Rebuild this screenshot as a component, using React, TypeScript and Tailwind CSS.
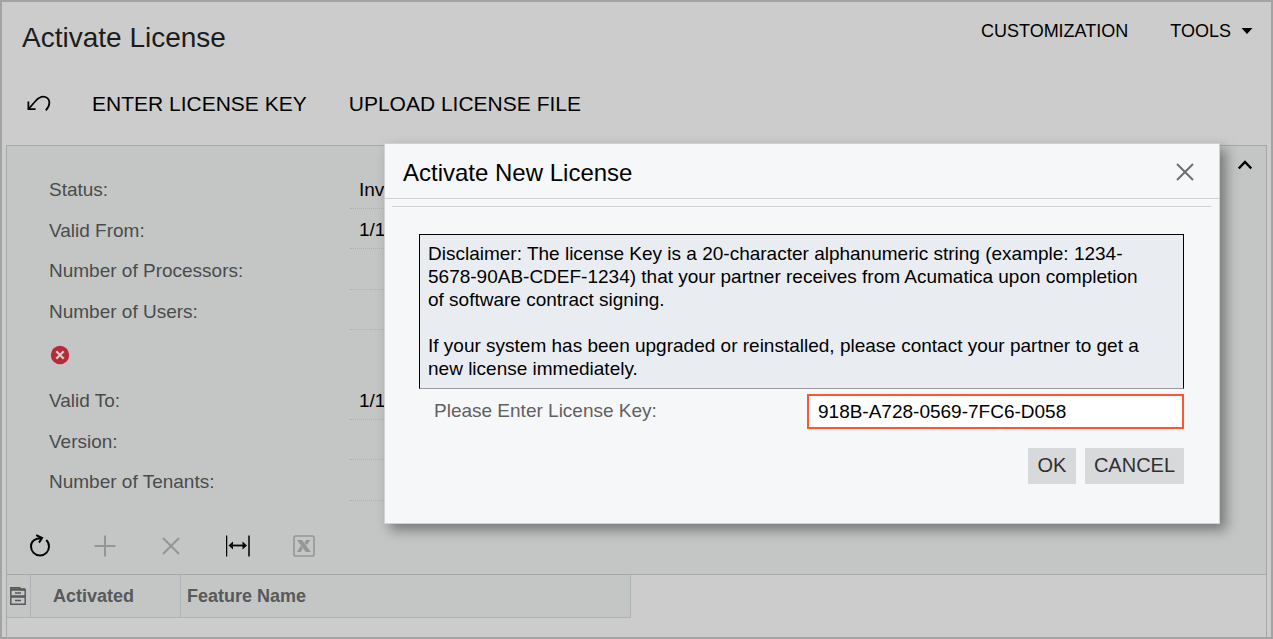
import React from 'react';

interface Field {
  id: string;
  label: string;
  value?: string;
}

const licenseFields: Field[] = [
  { id: 'status', label: 'Status:', value: 'Inv' },
  { id: 'valid-from', label: 'Valid From:', value: '1/1' },
  { id: 'processors', label: 'Number of Processors:' },
  { id: 'users', label: 'Number of Users:' }
];

const versionFields: Field[] = [
  { id: 'valid-to', label: 'Valid To:', value: '1/1' },
  { id: 'version', label: 'Version:' },
  { id: 'tenants', label: 'Number of Tenants:' }
];

const UndoIcon: React.FC = () => (
  <svg width="24" height="18" viewBox="0 0 24 18" fill="none" stroke="currentColor" strokeWidth="1.8">
    <path d="M1.500 14 8.600 6C12 2.200 15.400 1 18.400 2c4.900 1.700 5.500 8.200.4 13.300" />
    <path d="M1.400 6.500v7.600h7.200" />
  </svg>
);

const RefreshIcon: React.FC = () => (
  <svg width="22" height="24" viewBox="0 0 22 24" fill="none" stroke="currentColor" strokeWidth="2">
    <path d="M12.500 4.200 8 4.700C4.200 6 2 9 2 12.500c0 5 4 9 9 9s9-4 9-9c0-2.700-1-4.800-2.800-6.400" />
    <path d="M7.200 1.200 13 4 10 8.600" />
  </svg>
);

const PlusIcon: React.FC = () => (
  <svg width="22" height="22" viewBox="0 0 22 22" fill="none" stroke="currentColor" strokeWidth="2">
    <path d="M0.500 11h21M11 0.500v21" />
  </svg>
);

const CrossIcon: React.FC = () => (
  <svg width="18" height="18" viewBox="0 0 18 18" fill="none" stroke="currentColor" strokeWidth="2">
    <path d="m1 1 16 16M17 1 1 17" />
  </svg>
);

const FitColumnsIcon: React.FC = () => (
  <svg width="24" height="22" viewBox="0 0 24 22" fill="none" stroke="currentColor">
    <path d="M0.500 0.500v21M23 0.500v21" strokeWidth="1.500" />
    <path d="M5 10.500h14" strokeWidth="1.800" />
    <path d="m2.500 10.500 4.500-4v8zM21 10.500l-4.500-4v8z" fill="currentColor" stroke="none" />
  </svg>
);

const ExcelIcon: React.FC = () => (
  <svg width="22" height="22" viewBox="0 0 22 22" fill="none" stroke="currentColor">
    <rect x="1" y="1" width="20" height="20" rx="1.500" strokeWidth="1.600" />
    <path d="M4 5h5L17.800 17h-5z" fill="currentColor" stroke="none" />
    <path d="M13.500 5h4l-4 5-2-2.600zM7.800 10.800l2 2.700L7.800 17H4z" fill="currentColor" stroke="none" />
  </svg>
);

const ErrorIcon: React.FC = () => (
  <svg width="20" height="20" viewBox="0 0 20 20" fill="none">
    <circle cx="10" cy="10" r="9.200" fill="#b72a3a" />
    <path d="m6.300 6.300 7.400 7.400m0-7.400-7.400 7.400" stroke="#d0d0d0" strokeWidth="2.200" />
  </svg>
);

const FilesIcon: React.FC = () => (
  <svg width="16" height="18" viewBox="0 0 16 18" fill="none" stroke="currentColor">
    <path d="M0.800 17.200V0.800h9v1.700h5.400v14.700z" strokeWidth="1.500" />
    <path d="M1 2.500h14M1 9.500h14" strokeWidth="2.400" />
    <path d="M5 6h6M5 13.500h6" strokeWidth="1.600" />
  </svg>
);

const FieldRow: React.FC<{ field: Field }> = ({ field }) => (
  <div className="flex items-stretch">
    <label htmlFor={field.id} className="flex w-[301px] items-center pt-1 text-[#4a4c4c]">
      {field.label}
    </label>
    <input
      id={field.id}
      readOnly
      defaultValue={field.value}
      className="w-80 border-b border-dotted border-[#adb0b3] bg-transparent px-[9px] pt-1 text-black outline-none"
    />
  </div>
);

const LicenseDialog: React.FC = () => (
  <div className="absolute inset-0 flex items-start justify-end pt-[141px] pr-[51px]">
    <section
      role="dialog"
      aria-labelledby="dialog-title"
      className="w-[836px] max-w-full border border-[#cfd1d3] bg-[#f6f7f9] pb-[39px] shadow-[6px_6px_12px_rgba(0,0,0,0.4)]"
    >
      <header className="flex h-[55px] items-center justify-between border-b border-[#cfd1d4] pr-[25px] pl-[18px]">
        <h2 id="dialog-title" className="pt-1 text-2xl text-black">Activate New License</h2>
        <button type="button" aria-label="Close" className="pt-[2px] text-[#6c6e70]">
          <CrossIcon />
        </button>
      </header>

      <div className="mr-2 ml-[7px] mt-[7px] border-t border-[#cfd1d4] px-[27px] pt-[27px]">
        <div className="border border-black border-b-[#999b9e] bg-[#e9edf2] px-2 pt-[7px] pb-2 leading-[23px] text-black">
          <p>
            Disclaimer: The license Key is a 20-character alphanumeric string (example: 1234-
            <br />
            5678-90AB-CDEF-1234) that your partner receives from Acumatica upon completion
            <br />
            of software contract signing.
          </p>
          <p className="mt-[23px]">
            If your system has been upgraded or reinstalled, please contact your partner to get a
            <br />
            new license immediately.
          </p>
        </div>

        <div className="mt-[5px] flex items-center justify-between pl-[15px]">
          <label htmlFor="license-key" className="text-[#5f6163]">Please Enter License Key:</label>
          <input
            id="license-key"
            type="text"
            defaultValue="918B-A728-0569-7FC6-D058"
            className="h-[35px] w-[377px] border-2 border-[#ff5533] bg-white px-[9px] text-black outline-none"
          />
        </div>

        <div className="mt-[19px] flex justify-end gap-[9px] text-xl text-[#2e3032]">
          <button type="button" className="h-9 w-12 bg-[#d8d9db] pb-[2px]">OK</button>
          <button type="button" className="h-9 w-[99px] bg-[#d8d9db] pb-[2px]">CANCEL</button>
        </div>
      </div>
    </section>
  </div>
);

export default function App() {
  return (
    <div className="relative flex min-h-screen flex-col overflow-hidden border-2 border-[#a3a3a3] bg-[#cccccc] px-1 font-['Liberation_Sans',Arial,sans-serif] text-[19px]">
      <header className="flex h-[70px] justify-between pr-[14px] pl-4">
        <h1 className="flex items-center pt-[2px] text-[28px] text-[#1c1c1c]">Activate License</h1>
        <nav className="flex h-[58px] items-center gap-[42px] text-lg text-black">
          <button type="button">CUSTOMIZATION</button>
          <button type="button" className="flex items-center gap-[10px]">
            TOOLS
            <svg width="12" height="6" viewBox="0 0 12 6" fill="currentColor">
              <path d="M0.500 0h11L6 6z" />
            </svg>
          </button>
        </nav>
      </header>

      <div className="mb-[10px] flex h-[63px] items-center pl-[21px] text-[21px] text-black">
        <button type="button" aria-label="Undo" className="mr-[41px]"><UndoIcon /></button>
        <button type="button" className="mr-[42px]">ENTER LICENSE KEY</button>
        <button type="button">UPLOAD LICENSE FILE</button>
      </div>

      <main className="flex flex-1 flex-col border border-b-0 border-[#a6a9a9]">
        <div className="border-b border-[#a6a9a9] bg-[#c4c6c5]">
          <div className="flex justify-between pt-[22px] pr-[14px] pl-[42px]">
            <form>
              <div className="grid h-[162px] grid-rows-4">
                {licenseFields.map((field) => <FieldRow key={field.id} field={field} />)}
              </div>
              <div className="flex h-[49px] items-center pt-px pl-px"><ErrorIcon /></div>
              <div className="grid h-[122px] grid-rows-3">
                {versionFields.map((field) => <FieldRow key={field.id} field={field} />)}
              </div>
            </form>
            <button type="button" aria-label="Collapse" className="-mt-2 self-start text-black">
              <svg width="14" height="10" viewBox="0 0 14 10" fill="none" stroke="currentColor" strokeWidth="2.400">
                <path d="M0.800 8.500 7 2l6.200 6.500" />
              </svg>
            </button>
          </div>

          <div className="flex h-[73px] items-center pt-4 pl-[22px] text-[#949695]">
            <button type="button" aria-label="Refresh" className="mr-[43px] text-black"><RefreshIcon /></button>
            <button type="button" aria-label="Add row" className="mr-[46px]"><PlusIcon /></button>
            <button type="button" aria-label="Delete row" className="mr-[46px]"><CrossIcon /></button>
            <button type="button" aria-label="Fit to screen" className="mr-[43px] text-black"><FitColumnsIcon /></button>
            <button type="button" aria-label="Export to Excel"><ExcelIcon /></button>
          </div>
        </div>

        <table className="w-[624px] table-fixed border-separate border-spacing-0 bg-[#c4c6c5] text-lg text-[#58595a]">
          <thead>
            <tr className="h-[43px] text-left">
              <th aria-label="Files" className="w-6 border-r border-b border-[#aeb1b6] pl-[3px]"><FilesIcon /></th>
              <th className="w-[150px] border-r border-b border-[#aeb1b6] pl-[22px]">Activated</th>
              <th className="border-r border-b border-[#aeb1b6] pl-[6px]">Feature Name</th>
            </tr>
          </thead>
        </table>
      </main>

      <LicenseDialog />
    </div>
  );
}
